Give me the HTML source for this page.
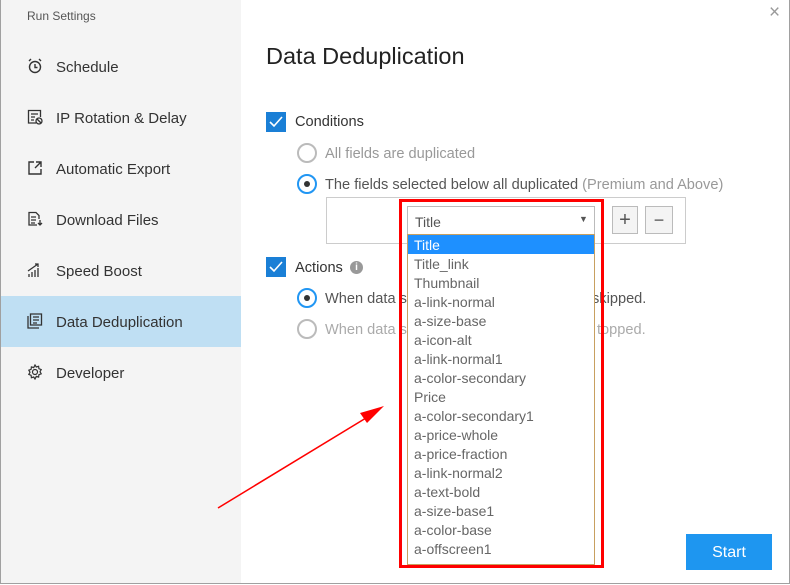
<!DOCTYPE html>
<html><head><style>
*{margin:0;padding:0;box-sizing:border-box}
body{width:790px;height:585px;position:relative;font-family:"Liberation Sans",Arial,sans-serif;background:#fff;overflow:hidden}
.frame{position:absolute;left:0;top:0;width:790px;height:584px;border:1px solid #a0a0a0;border-top:none}
.side{position:absolute;left:1px;top:0;width:240px;height:583px;background:#f4f4f4}
.t{position:absolute;color:#444;white-space:nowrap}
.it{position:absolute;left:0;width:240px;height:51px;font-size:15px;color:#333;line-height:53px;padding-left:55px}
.it svg{position:absolute;left:26px;top:17px}
.act{background:#bfdff3}
.cb{position:absolute;width:20px;height:20px;background:#1a7fd6}
.rd{position:absolute;width:20px;height:20px;border:2px solid #bbb;border-radius:50%}
.rd.on{border-color:#2196f3}
.rd.on::after{content:"";position:absolute;left:5px;top:5px;width:6px;height:6px;border-radius:50%;background:#333}
.list div{height:19px;line-height:20px;padding-left:6px;font-size:14px;color:#666}
.f{font-size:14.6px}
</style></head><body>
<div class="side">
<div class="t" style="left:26px;top:9px;font-size:12px;color:#555">Run Settings</div>
<div class="it" style="top:41px"><svg width="16" height="16" viewBox="0 0 16 16" fill="none" stroke="#333" stroke-width="1.4"><circle cx="8" cy="9" r="5.5"/><path d="M8 6v3.5h2.5M2 3l2-2M14 3l-2-2"/></svg>Schedule</div>
<div class="it" style="top:92px"><svg width="16" height="16" viewBox="0 0 16 16" fill="none" stroke="#333" stroke-width="1.3"><path d="M9 14H1.5V1.5h12V8M4 5h7M4 8h4M4 11h3"/><circle cx="12" cy="12" r="3"/><path d="M10 10l4 4"/></svg>IP Rotation &amp; Delay</div>
<div class="it" style="top:143px"><svg width="16" height="16" viewBox="0 0 16 16" fill="none" stroke="#333" stroke-width="1.4"><path d="M7 2H2v12h12V9M9 2h5v5M14 2L8 8"/></svg>Automatic Export</div>
<div class="it" style="top:194px"><svg width="16" height="16" viewBox="0 0 16 16" fill="none" stroke="#333" stroke-width="1.3"><path d="M10 14H2V1.5h7l3 3V8M4 6h5M4 9h5M4 12h4M13 9v5M11 12l2 2 2-2"/></svg>Download Files</div>
<div class="it" style="top:245px"><svg width="16" height="16" viewBox="0 0 16 16" fill="none" stroke="#333" stroke-width="1.3"><path d="M2 15v-3M5 15v-5M8 15V8M11 15V6M1 9l10-7M8 2h3v3"/></svg>Speed Boost</div>
<div class="it act" style="top:296px"><svg width="16" height="16" viewBox="0 0 16 16" fill="none" stroke="#333" stroke-width="1.3"><path d="M1 3v12h11M3.5 1h11v11h-11zM6 4h6M6 7h6M6 10h4"/></svg>Data Deduplication</div>
<div class="it" style="top:347px"><svg width="16" height="16" viewBox="0 0 16 16" fill="none" stroke="#333" stroke-width="1.2"><circle cx="8" cy="8" r="2.5"/><path d="M8 1l1.3 2 2.3-.7.3 2.4 2.3.9-1.2 2.1 1.2 2.1-2.3.9-.3 2.4-2.3-.7L8 15l-1.3-2-2.3.7-.3-2.4-2.3-.9 1.2-2.1-1.2-2.1 2.3-.9.3-2.4 2.3.7z"/></svg>Developer</div>
</div>
<div class="frame"></div>
<div class="t" style="left:769px;top:2px;font-size:19px;color:#999">×</div>
<div class="t" style="left:266px;top:43px;font-size:23.5px;color:#222">Data Deduplication</div>
<div class="cb" style="left:266px;top:112px"><svg width="20" height="20"><path d="M4 10l4 4 8-9" stroke="#fff" stroke-width="1.6" fill="none"/></svg></div>
<div class="t f" style="left:295px;top:114px;color:#333">Conditions</div>
<div class="rd" style="left:297px;top:143px"></div>
<div class="t f" style="left:325px;top:146px;color:#999">All fields are duplicated</div>
<div class="rd on" style="left:297px;top:174px"></div>
<div class="t f" style="left:325px;top:177px;color:#555">The fields selected below all duplicated <span style="color:#999">(Premium and Above)</span></div>
<div style="position:absolute;left:326px;top:197px;width:360px;height:47px;border:1px solid #ccc;background:#fff"></div>
<div style="position:absolute;left:407px;top:206px;width:188px;height:29px;border:1px solid #bbb;background:#fff"><span class="t" style="left:7px;top:7px;font-size:14px;color:#555">Title</span><span class="t" style="left:171px;top:7px;font-size:9px;color:#555">▼</span></div>
<div style="position:absolute;left:612px;top:206px;width:26px;height:28px;border:1px solid #bbb;background:#f4f4f4;text-align:center;line-height:26px;font-size:20px;color:#555">+</div>
<div style="position:absolute;left:645px;top:206px;width:28px;height:28px;border:1px solid #bbb;background:#f4f4f4;text-align:center;line-height:26px;font-size:18px;color:#555">−</div>
<div class="cb" style="left:266px;top:257px"><svg width="20" height="20"><path d="M4 10l4 4 8-9" stroke="#fff" stroke-width="1.6" fill="none"/></svg></div>
<div class="t f" style="left:295px;top:260px;color:#333">Actions</div>
<div style="position:absolute;left:350px;top:261px;width:13px;height:13px;border-radius:50%;background:#999;color:#fff;font-size:10px;font-weight:bold;text-align:center;line-height:13px">i</div>
<div class="rd on" style="left:297px;top:288px"></div>
<div class="t f" style="left:325px;top:291px;color:#555">When data s</div>
<div class="t f" style="left:592px;top:291px;color:#555">skipped.</div>
<div class="rd" style="left:297px;top:319px"></div>
<div class="t f" style="left:325px;top:322px;color:#aaa">When data s</div>
<div class="t f" style="left:597px;top:322px;color:#aaa">topped.</div>
<div class="list" style="position:absolute;left:407px;top:234px;width:188px;height:331px;border:1px solid #c8a060;background:#fff">
<div style="background:#1e90ff;color:#fff">Title</div><div>Title_link</div><div>Thumbnail</div><div>a-link-normal</div><div>a-size-base</div><div>a-icon-alt</div><div>a-link-normal1</div><div>a-color-secondary</div><div>Price</div><div>a-color-secondary1</div><div>a-price-whole</div><div>a-price-fraction</div><div>a-link-normal2</div><div>a-text-bold</div><div>a-size-base1</div><div>a-color-base</div><div>a-offscreen1</div>
</div>
<div style="position:absolute;left:399px;top:199px;width:205px;height:369px;border:3px solid #f00"></div>
<svg style="position:absolute;left:0;top:0" width="790" height="585"><path d="M218 508L366 418" stroke="#f00" stroke-width="1.6"/><path d="M384 406L360 413L367 423Z" fill="#f00"/></svg>
<div style="position:absolute;left:686px;top:534px;width:86px;height:36px;background:#1e96f0;color:#fff;font-size:16px;text-align:center;line-height:37px">Start</div>
</body></html>
